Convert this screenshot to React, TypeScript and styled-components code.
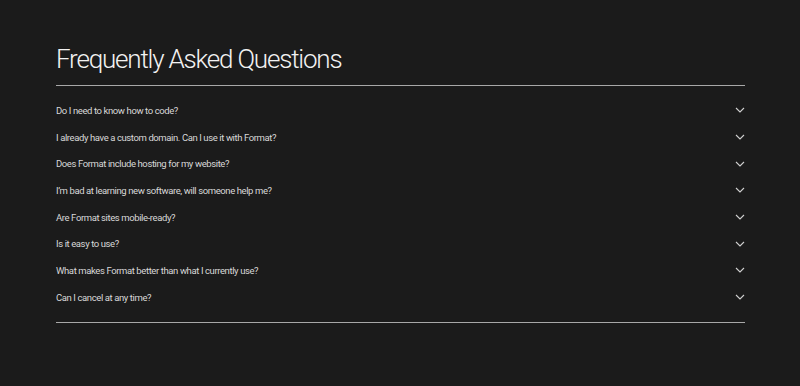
import React from 'react';
import styled, { createGlobalStyle } from 'styled-components';

const GlobalStyle = createGlobalStyle`
  html, body {
    margin: 0;
    padding: 0;
    background: #1b1b1b;
  }
  body {
    font-family: Roboto, "Liberation Sans", sans-serif;
  }
`;

const Page = styled.div`
  width: 800px;
  height: 386px;
  background: #1b1b1b;
  padding: 41px 55px 0 56px;
  box-sizing: border-box;
`;

const Title = styled.h2`
  margin: 0;
  font-size: 26px;
  line-height: 36px;
  font-weight: 300;
  letter-spacing: -1.2px;
  color: #f2f2f2;
  padding-bottom: 8px;
  border-bottom: 1px solid #a8a8a8;
`;

const List = styled.ul`
  list-style: none;
  margin: 0;
  padding: 11px 0 11px;
  border-bottom: 1px solid #a8a8a8;
`;

const Row = styled.li`
  display: flex;
  align-items: center;
  justify-content: space-between;
  height: 26.7px;
  font-size: 9.5px;
  letter-spacing: -0.4px;
  color: #d8d8d8;
  cursor: pointer;
`;

const Chevron = () => (
  <svg width="10" height="6" viewBox="0 0 10 6" fill="none">
    <path d="M1 1l4 4 4-4" stroke="#d0d0d0" strokeWidth="1.1" />
  </svg>
);

const questions = [
  'Do I need to know how to code?',
  'I already have a custom domain. Can I use it with Format?',
  'Does Format include hosting for my website?',
  'I’m bad at learning new software, will someone help me?',
  'Are Format sites mobile-ready?',
  'Is it easy to use?',
  'What makes Format better than what I currently use?',
  'Can I cancel at any time?',
];

export default function App() {
  return (
    <Page>
      <GlobalStyle />
      <Title>Frequently Asked Questions</Title>
      <List>
        {questions.map((q) => (
          <Row key={q}>
            <span>{q}</span>
            <Chevron />
          </Row>
        ))}
      </List>
    </Page>
  );
}
